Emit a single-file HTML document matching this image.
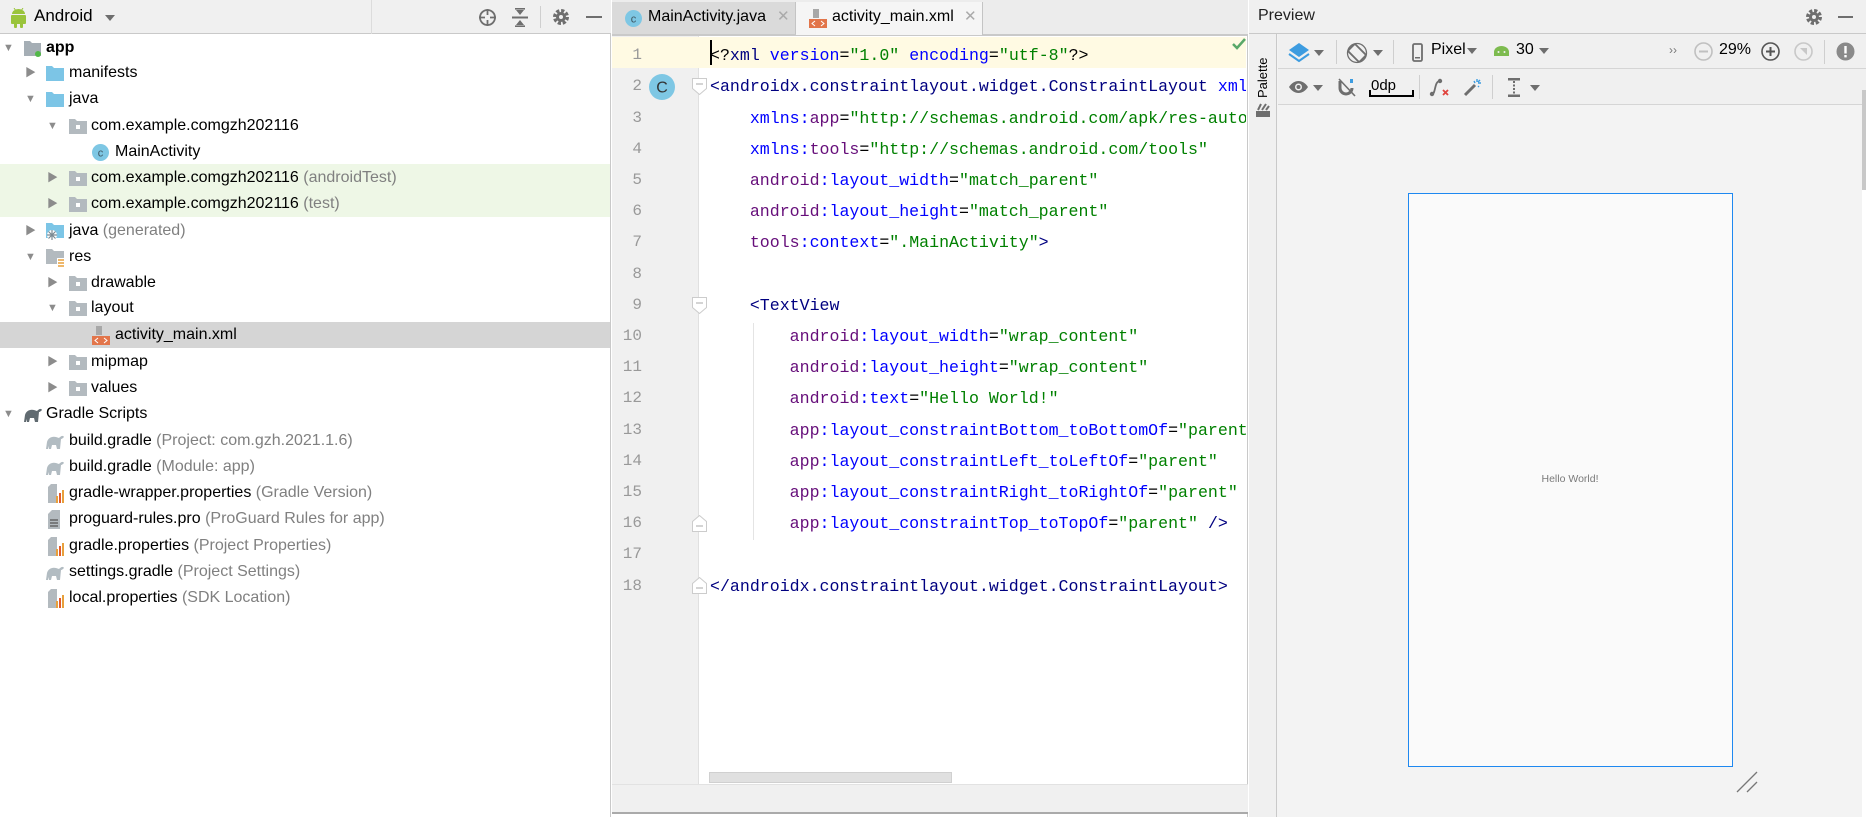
<!DOCTYPE html>
<html><head><meta charset="utf-8"><style>
*{margin:0;padding:0;box-sizing:border-box}
body{width:1866px;height:817px;overflow:hidden;background:#fff;font-family:"Liberation Sans","Noto Sans CJK SC",sans-serif;position:relative}
.abs{position:absolute}
#left{left:0;top:0;width:611px;height:817px;background:#fff;border-right:1px solid #c9c9c9}
.hdr{background:#f0f0f0;border-bottom:1px solid #c9c9c9;height:34px}
.row{position:absolute;left:0;width:610px;height:26px;font-size:16px;line-height:26px;color:#000;white-space:nowrap}
.row .t{position:absolute;top:0}
.g{color:#808080}
.arr{position:absolute;top:0;font-size:11px;color:#8c8c8c}
.ico{position:absolute}
.code{position:absolute;left:0;font-family:"Liberation Mono",monospace;font-size:16.6px;white-space:pre;height:31px;line-height:31px}
.ln{position:absolute;left:0;width:30px;text-align:right;font-family:"Liberation Mono",monospace;font-size:16px;color:#999;height:31px;line-height:31px}
.tg{color:#000080}.at{color:#0000ff}.ns{color:#660e7a}.v{color:#008000}.p{color:#000}
.sep{position:absolute;width:1px;background:#cfcfcf}
.dd{position:absolute;width:0;height:0;border-left:5px solid transparent;border-right:5px solid transparent;border-top:6px solid #6e6e6e}
</style></head><body>

<!-- LEFT PROJECT PANEL -->
<div id="left" class="abs">
 <div class="hdr abs" style="left:0;top:0;width:611px"></div>
 <div class="abs" style="left:371px;top:0;width:1px;height:34px;background:#dcdcdc"></div>
 <svg class="abs" style="left:10px;top:8px" width="17" height="20" viewBox="0 0 17 20"><rect x="1" y="7" width="15" height="9" rx="1" fill="#9ac43c"/><path d="M2 6a6.5 5 0 0 1 13 0z" fill="#9ac43c"/><rect x="4" y="15" width="3" height="5" rx="1" fill="#9ac43c"/><rect x="10" y="15" width="3" height="5" rx="1" fill="#9ac43c"/><line x1="4" y1="0" x2="6" y2="3" stroke="#9ac43c"/><line x1="13" y1="0" x2="11" y2="3" stroke="#9ac43c"/></svg>
 <div class="abs" style="left:34px;top:6px;font-size:17px;color:#000">Android</div>
 <div class="dd" style="left:105px;top:15px"></div>
 <svg class="abs" style="left:478px;top:8px" width="19" height="19" viewBox="0 0 19 19" fill="none" stroke="#6e6e6e" stroke-width="1.8"><circle cx="9.5" cy="9.5" r="7.5"/><path d="M9.5 1v6M9.5 12v6M1 9.5h6M12 9.5h6"/></svg>
 <svg class="abs" style="left:512px;top:8px" width="16" height="19" viewBox="0 0 16 19" fill="#6e6e6e"><rect x="0" y="8.5" width="16" height="2"/><path d="M8 7L4 2h8zM8 12l-4 5h8z"/><rect x="3" y="0" width="10" height="1.6"/><rect x="3" y="17.4" width="10" height="1.6"/></svg>
 <div class="sep" style="left:540px;top:6px;height:22px"></div>
 <svg class="abs" style="left:552px;top:8px" width="18" height="18" viewBox="0 0 18 18"><circle cx="9" cy="9" r="6" fill="none" stroke="#6e6e6e" stroke-width="4" stroke-dasharray="3 1.7"/><circle cx="9" cy="9" r="5" fill="#6e6e6e"/><circle cx="9" cy="9" r="2" fill="#f0f0f0"/></svg>
 <div class="abs" style="left:586px;top:16px;width:16px;height:2px;background:#6e6e6e"></div>

 <div class="abs" style="left:0;top:164px;width:610px;height:53px;background:#eef7e6"></div>
 <div class="abs" style="left:0;top:322px;width:610px;height:26px;background:#d5d5d5"></div>

 <div class="row" style="top:35px"><span class="arr" style="left:3px">▼</span>
  <svg class="ico" style="left:24px;top:5px" width="18" height="17"><path d="M0 1h6l2 2h9v13H0z" fill="#a5aeb5"/><circle cx="14" cy="14" r="3" fill="#52b848"/></svg>
  <span class="t" style="left:46px;font-weight:bold">app</span></div>
 <div class="row" style="top:60px"><span class="arr" style="left:25px">▶</span>
  <svg class="ico" style="left:46px;top:6px" width="18" height="15"><path d="M0 0h6l2 2h10v13H0z" fill="#7cc5e6"/></svg>
  <span class="t" style="left:69px">manifests</span></div>
 <div class="row" style="top:86px"><span class="arr" style="left:25px">▼</span>
  <svg class="ico" style="left:46px;top:6px" width="18" height="15"><path d="M0 0h6l2 2h10v13H0z" fill="#7cc5e6"/></svg>
  <span class="t" style="left:69px">java</span></div>
 <div class="row" style="top:113px"><span class="arr" style="left:47px">▼</span>
  <svg class="ico" style="left:69px;top:6px" width="18" height="15"><path d="M0 0h6l2 2h10v13H0z" fill="#b3babf"/><rect x="7" y="6" width="4" height="4" fill="#fff"/></svg>
  <span class="t" style="left:91px">com.example.comgzh202116</span></div>
 <div class="row" style="top:139px">
  <svg class="ico" style="left:92px;top:5px" width="17" height="17"><circle cx="8.5" cy="8.5" r="8.5" fill="#7ec7e4"/><text x="8.5" y="12.5" font-size="11" text-anchor="middle" fill="#3d5560" font-family="Liberation Sans">c</text></svg>
  <span class="t" style="left:115px">MainActivity</span></div>
 <div class="row" style="top:165px"><span class="arr" style="left:47px">▶</span>
  <svg class="ico" style="left:69px;top:6px" width="18" height="15"><path d="M0 0h6l2 2h10v13H0z" fill="#b3babf"/><rect x="7" y="6" width="4" height="4" fill="#fff"/></svg>
  <span class="t" style="left:91px">com.example.comgzh202116 <span class="g">(androidTest)</span></span></div>
 <div class="row" style="top:191px"><span class="arr" style="left:47px">▶</span>
  <svg class="ico" style="left:69px;top:6px" width="18" height="15"><path d="M0 0h6l2 2h10v13H0z" fill="#b3babf"/><rect x="7" y="6" width="4" height="4" fill="#fff"/></svg>
  <span class="t" style="left:91px">com.example.comgzh202116 <span class="g">(test)</span></span></div>
 <div class="row" style="top:218px"><span class="arr" style="left:25px">▶</span>
  <svg class="ico" style="left:46px;top:5px" width="19" height="18"><path d="M0 0h6l2 2h10v13H0z" fill="#7cc5e6"/><circle cx="6" cy="12" r="5" fill="#fff"/><path d="M6 7v10M1 12h10M2.5 8.5l7 7M9.5 8.5l-7 7" stroke="#7b8a93" stroke-width="1.2"/></svg>
  <span class="t" style="left:69px">java <span class="g">(generated)</span></span></div>
 <div class="row" style="top:244px"><span class="arr" style="left:25px">▼</span>
  <svg class="ico" style="left:46px;top:5px" width="19" height="18"><path d="M0 0h6l2 2h10v13H0z" fill="#b3babf"/><rect x="11" y="9" width="8" height="9" fill="#fff"/><path d="M12 11h6M12 14h6M12 17h6" stroke="#e8a03c" stroke-width="1.6"/></svg>
  <span class="t" style="left:69px">res</span></div>
 <div class="row" style="top:270px"><span class="arr" style="left:47px">▶</span>
  <svg class="ico" style="left:69px;top:6px" width="18" height="15"><path d="M0 0h6l2 2h10v13H0z" fill="#b3babf"/><rect x="7" y="6" width="4" height="4" fill="#fff"/></svg>
  <span class="t" style="left:91px">drawable</span></div>
 <div class="row" style="top:295px"><span class="arr" style="left:47px">▼</span>
  <svg class="ico" style="left:69px;top:6px" width="18" height="15"><path d="M0 0h6l2 2h10v13H0z" fill="#b3babf"/><rect x="7" y="6" width="4" height="4" fill="#fff"/></svg>
  <span class="t" style="left:91px">layout</span></div>
 <div class="row" style="top:322px">
  <svg class="ico" style="left:92px;top:4px" width="18" height="19"><path d="M4 0h6v9H4z" fill="#a8a8a8"/><rect x="0" y="10" width="18" height="9" fill="#e2754a"/><path d="M6 12l-3 2.5 3 2.5M12 12l3 2.5-3 2.5" stroke="#fff" fill="none"/></svg>
  <span class="t" style="left:115px">activity_main.xml</span></div>
 <div class="row" style="top:349px"><span class="arr" style="left:47px">▶</span>
  <svg class="ico" style="left:69px;top:6px" width="18" height="15"><path d="M0 0h6l2 2h10v13H0z" fill="#b3babf"/><rect x="7" y="6" width="4" height="4" fill="#fff"/></svg>
  <span class="t" style="left:91px">mipmap</span></div>
 <div class="row" style="top:375px"><span class="arr" style="left:47px">▶</span>
  <svg class="ico" style="left:69px;top:6px" width="18" height="15"><path d="M0 0h6l2 2h10v13H0z" fill="#b3babf"/><rect x="7" y="6" width="4" height="4" fill="#fff"/></svg>
  <span class="t" style="left:91px">values</span></div>
 <div class="row" style="top:401px"><span class="arr" style="left:3px">▼</span>
  <svg class="ico" style="left:23px;top:6px" width="19" height="15"><path d="M1 15l1-7c1-4 5-6 9-5l3 1c2-2 4-3 5-1-1 1-2 2-3 2l-1 10h-3l-1-4h-4l-1 4h-2l0-3-1 3z" fill="#606a70"/></svg>
  <span class="t" style="left:46px">Gradle Scripts</span></div>
 <div class="row" style="top:428px">
  <svg class="ico" style="left:45px;top:6px" width="19" height="15"><path d="M1 15l1-7c1-4 5-6 9-5l3 1c2-2 4-3 5-1-1 1-2 2-3 2l-1 10h-3l-1-4h-4l-1 4h-2l0-3-1 3z" fill="#b2bcc2"/></svg>
  <span class="t" style="left:69px">build.gradle <span class="g">(Project: com.gzh.2021.1.6)</span></span></div>
 <div class="row" style="top:454px">
  <svg class="ico" style="left:45px;top:6px" width="19" height="15"><path d="M1 15l1-7c1-4 5-6 9-5l3 1c2-2 4-3 5-1-1 1-2 2-3 2l-1 10h-3l-1-4h-4l-1 4h-2l0-3-1 3z" fill="#b2bcc2"/></svg>
  <span class="t" style="left:69px">build.gradle <span class="g">(Module: app)</span></span></div>
 <div class="row" style="top:480px">
  <svg class="ico" style="left:48px;top:4px" width="17" height="19"><path d="M0 3l3-3h6v19H0z" fill="#b3babf"/><rect x="8" y="12" width="2" height="7" fill="#e8a03c"/><rect x="11" y="9" width="2" height="10" fill="#e25a2c"/><rect x="14" y="6" width="2" height="13" fill="#e8a03c"/></svg>
  <span class="t" style="left:69px">gradle-wrapper.properties <span class="g">(Gradle Version)</span></span></div>
 <div class="row" style="top:506px">
  <svg class="ico" style="left:48px;top:4px" width="14" height="19"><path d="M0 4l4-4h8v19H0z" fill="#b3babf"/><path d="M2 10h8M2 13h8M2 16h8" stroke="#555" stroke-width="1.2"/></svg>
  <span class="t" style="left:69px">proguard-rules.pro <span class="g">(ProGuard Rules for app)</span></span></div>
 <div class="row" style="top:533px">
  <svg class="ico" style="left:48px;top:4px" width="17" height="19"><path d="M0 3l3-3h6v19H0z" fill="#b3babf"/><rect x="8" y="12" width="2" height="7" fill="#e8a03c"/><rect x="11" y="9" width="2" height="10" fill="#e25a2c"/><rect x="14" y="6" width="2" height="13" fill="#e8a03c"/></svg>
  <span class="t" style="left:69px">gradle.properties <span class="g">(Project Properties)</span></span></div>
 <div class="row" style="top:559px">
  <svg class="ico" style="left:45px;top:6px" width="19" height="15"><path d="M1 15l1-7c1-4 5-6 9-5l3 1c2-2 4-3 5-1-1 1-2 2-3 2l-1 10h-3l-1-4h-4l-1 4h-2l0-3-1 3z" fill="#b2bcc2"/></svg>
  <span class="t" style="left:69px">settings.gradle <span class="g">(Project Settings)</span></span></div>
 <div class="row" style="top:585px">
  <svg class="ico" style="left:48px;top:4px" width="17" height="19"><path d="M0 3l3-3h6v19H0z" fill="#b3babf"/><rect x="8" y="12" width="2" height="7" fill="#e8a03c"/><rect x="11" y="9" width="2" height="10" fill="#e25a2c"/><rect x="14" y="6" width="2" height="13" fill="#e8a03c"/></svg>
  <span class="t" style="left:69px">local.properties <span class="g">(SDK Location)</span></span></div>
</div>

<!-- EDITOR -->
<div class="abs" style="left:612px;top:0;width:636px;height:817px;background:#fff;border-right:1px solid #c9c9c9">
 <div class="abs" style="left:0;top:0;width:636px;height:36px;background:#ececec;border-bottom:2px solid #c9c9c9"></div>
 <div class="abs" style="left:0;top:2px;width:184px;height:32px;background:#dadada;border-right:1px solid #c4c4c4"></div>
 <svg class="abs" style="left:13px;top:10px" width="17" height="17"><circle cx="8.5" cy="8.5" r="8.5" fill="#7ec7e4"/><text x="8.5" y="12.5" font-size="11" text-anchor="middle" fill="#3d5560" font-family="Liberation Sans">c</text></svg>
 <div class="abs" style="left:36px;top:8px;font-size:16px;color:#000">MainActivity.java</div>
 <div class="abs" style="left:165px;top:7px;font-size:15px;color:#aaa">✕</div>
 <div class="abs" style="left:184px;top:2px;width:187px;height:33px;background:#f5f5f5;border-right:1px solid #c4c4c4"></div>
 <svg class="abs" style="left:197px;top:9px" width="18" height="19"><path d="M4 0h6v9H4z" fill="#a8a8a8"/><rect x="0" y="10" width="18" height="9" fill="#e2754a"/><path d="M6 12l-3 2.5 3 2.5M12 12l3 2.5-3 2.5" stroke="#fff" fill="none"/></svg>
 <div class="abs" style="left:220px;top:8px;font-size:16px;color:#000">activity_main.xml</div>
 <div class="abs" style="left:352px;top:7px;font-size:15px;color:#aaa">✕</div>

 <div class="abs" style="left:0;top:36px;width:87px;height:748px;background:#f0f0f0;border-right:1px solid #e0e0e0"></div>
 <div class="abs" style="left:0;top:37px;width:634px;height:31px;background:#fffae3"></div>
 <div class="abs" style="left:98px;top:40px;width:2px;height:25px;background:#000"></div>
 <svg class="abs" style="left:620px;top:38px" width="14" height="12"><path d="M1 6l4 4 8-9" stroke="#59a869" stroke-width="2.5" fill="none"/></svg>
 <svg class="abs" style="left:37px;top:74px" width="26" height="26"><circle cx="13" cy="13" r="13" fill="#7ec7e4"/><text x="13" y="18.5" font-size="16" text-anchor="middle" fill="#333" font-family="Liberation Sans">C</text></svg>
 <svg class="abs" style="left:80px;top:78px" width="15" height="17"><path d="M0.5 0.5h14v10l-7 6-7-6z" fill="#fff" stroke="#ccc"/><path d="M4 6h7" stroke="#aaa"/></svg>
 <svg class="abs" style="left:80px;top:297px" width="15" height="17"><path d="M0.5 0.5h14v10l-7 6-7-6z" fill="#fff" stroke="#ccc"/><path d="M4 6h7" stroke="#aaa"/></svg>
 <svg class="abs" style="left:80px;top:515px" width="15" height="17"><path d="M0.5 16.5h14v-10l-7-6-7 6z" fill="#fff" stroke="#ccc"/><path d="M4 11h7" stroke="#aaa"/></svg>
 <svg class="abs" style="left:80px;top:577px" width="15" height="17"><path d="M0.5 16.5h14v-10l-7-6-7 6z" fill="#fff" stroke="#ccc"/><path d="M4 11h7" stroke="#aaa"/></svg>
 <div class="abs" style="left:141px;top:323px;width:1px;height:217px;background:#e4e4e4"></div>

 <div class="ln" style="top:40px">1</div>
 <div class="ln" style="top:71px">2</div>
 <div class="ln" style="top:103px">3</div>
 <div class="ln" style="top:134px">4</div>
 <div class="ln" style="top:165px">5</div>
 <div class="ln" style="top:196px">6</div>
 <div class="ln" style="top:227px">7</div>
 <div class="ln" style="top:259px">8</div>
 <div class="ln" style="top:290px">9</div>
 <div class="ln" style="top:321px">10</div>
 <div class="ln" style="top:352px">11</div>
 <div class="ln" style="top:383px">12</div>
 <div class="ln" style="top:415px">13</div>
 <div class="ln" style="top:446px">14</div>
 <div class="ln" style="top:477px">15</div>
 <div class="ln" style="top:508px">16</div>
 <div class="ln" style="top:539px">17</div>
 <div class="ln" style="top:571px">18</div>

 <div class="abs" style="left:98px;top:36px;width:536px;height:748px;overflow:hidden">
 <div class="code" style="top:4px"><span class="p">&lt;?</span><span class="tg">xml </span><span class="at">version</span>=<span class="v">"1.0"</span> <span class="at">encoding</span>=<span class="v">"utf-8"</span><span class="p">?&gt;</span></div>
 <div class="code" style="top:35px"><span class="tg">&lt;androidx.constraintlayout.widget.ConstraintLayout </span><span class="at">xmlns:android</span></div>
 <div class="code" style="top:67px">    <span class="at">xmlns:</span><span class="ns">app</span>=<span class="v">"http://schemas.android.com/apk/res-auto"</span></div>
 <div class="code" style="top:98px">    <span class="at">xmlns:</span><span class="ns">tools</span>=<span class="v">"http://schemas.android.com/tools"</span></div>
 <div class="code" style="top:129px">    <span class="ns">android</span><span class="at">:layout_width</span>=<span class="v">"match_parent"</span></div>
 <div class="code" style="top:160px">    <span class="ns">android</span><span class="at">:layout_height</span>=<span class="v">"match_parent"</span></div>
 <div class="code" style="top:191px">    <span class="ns">tools</span><span class="at">:context</span>=<span class="v">".MainActivity"</span><span class="tg">&gt;</span></div>
 <div class="code" style="top:254px">    <span class="tg">&lt;TextView</span></div>
 <div class="code" style="top:285px">        <span class="ns">android</span><span class="at">:layout_width</span>=<span class="v">"wrap_content"</span></div>
 <div class="code" style="top:316px">        <span class="ns">android</span><span class="at">:layout_height</span>=<span class="v">"wrap_content"</span></div>
 <div class="code" style="top:347px">        <span class="ns">android</span><span class="at">:text</span>=<span class="v">"Hello World!"</span></div>
 <div class="code" style="top:379px">        <span class="ns">app</span><span class="at">:layout_constraintBottom_toBottomOf</span>=<span class="v">"parent"</span></div>
 <div class="code" style="top:410px">        <span class="ns">app</span><span class="at">:layout_constraintLeft_toLeftOf</span>=<span class="v">"parent"</span></div>
 <div class="code" style="top:441px">        <span class="ns">app</span><span class="at">:layout_constraintRight_toRightOf</span>=<span class="v">"parent"</span></div>
 <div class="code" style="top:472px">        <span class="ns">app</span><span class="at">:layout_constraintTop_toTopOf</span>=<span class="v">"parent"</span> <span class="tg">/&gt;</span></div>
 <div class="code" style="top:535px"><span class="tg">&lt;/androidx.constraintlayout.widget.ConstraintLayout&gt;</span></div>
 </div>
 <div class="abs" style="left:97px;top:772px;width:243px;height:11px;background:#e0e0e0;border:1px solid #d0d0d0"></div>
 <div class="abs" style="left:0;top:784px;width:636px;height:30px;background:#f0f0f0;border-top:1px solid #e2e2e2;border-bottom:2px solid #aaa"></div>
</div>

<!-- PREVIEW -->
<div class="abs" style="left:1249px;top:0;width:617px;height:817px;background:#f3f3f3">
 <div class="abs" style="left:0;top:0;width:617px;height:34px;background:#f0f0f0;border-bottom:1px solid #c9c9c9"></div>
 <div class="abs" style="left:9px;top:7px;font-size:16px;color:#222">Preview</div>
 <svg class="abs" style="left:556px;top:8px" width="18" height="18" viewBox="0 0 18 18"><circle cx="9" cy="9" r="6" fill="none" stroke="#6e6e6e" stroke-width="4" stroke-dasharray="3 1.7"/><circle cx="9" cy="9" r="5" fill="#6e6e6e"/><circle cx="9" cy="9" r="2" fill="#f0f0f0"/></svg>
 <div class="abs" style="left:589px;top:16px;width:15px;height:2px;background:#6e6e6e"></div>
 <div class="abs" style="left:0;top:34px;width:28px;height:783px;background:#f0f0f0;border-right:1px solid #c9c9c9"></div>
 <div class="abs" style="left:6px;top:98px;transform:rotate(-90deg);transform-origin:0 0;font-size:13px;color:#000;white-space:nowrap">Palette</div>
 <svg class="abs" style="left:7px;top:103px" width="14" height="14"><rect x="0" y="8" width="14" height="6" fill="#6e6e6e"/><path d="M2 7l3-6M6 7l4-6M10 7l3-4" stroke="#6e6e6e" stroke-width="2"/></svg>
 <div class="abs" style="left:29px;top:34px;width:588px;height:35px;background:#f0f0f0;border-bottom:1px solid #d5d5d5"></div>
 <div class="abs" style="left:29px;top:69px;width:588px;height:36px;background:#f0f0f0;border-bottom:1px solid #d5d5d5"></div>
 <svg class="abs" style="left:39px;top:42px" width="22" height="21"><path d="M11 1l10 7-10 7-10-7z" fill="#3d9ce0"/><path d="M1 12l10 7 10-7" fill="none" stroke="#3d9ce0" stroke-width="2"/></svg>
 <div class="dd" style="left:65px;top:50px"></div>
 <div class="sep" style="left:87px;top:40px;height:24px"></div>
 <svg class="abs" style="left:97px;top:42px" width="22" height="22"><circle cx="11" cy="11" r="9.5" fill="none" stroke="#6e6e6e" stroke-width="1.3"/><rect x="6" y="3" width="10" height="16" rx="1.5" transform="rotate(-45 11 11)" fill="none" stroke="#6e6e6e" stroke-width="1.8"/></svg>
 <div class="dd" style="left:124px;top:50px"></div>
 <div class="sep" style="left:144px;top:40px;height:24px"></div>
 <svg class="abs" style="left:163px;top:43px" width="11" height="19"><rect x="1" y="1" width="9" height="17" rx="1.5" fill="none" stroke="#6e6e6e" stroke-width="1.8"/><rect x="3" y="14" width="5" height="1.5" fill="#6e6e6e"/></svg>
 <div class="abs" style="left:182px;top:41px;font-size:16px;color:#000">Pixel</div>
 <div class="dd" style="left:218px;top:48px"></div>
 <svg class="abs" style="left:244px;top:45px" width="17" height="12"><path d="M1 11V7a7.5 6 0 0 1 15 0v4z" fill="#7dbb4f"/><circle cx="5.5" cy="7" r="1" fill="#f0f0f0"/><circle cx="11.5" cy="7" r="1" fill="#f0f0f0"/></svg>
 <div class="abs" style="left:267px;top:41px;font-size:16px;color:#000">30</div>
 <div class="dd" style="left:290px;top:48px"></div>
 <div class="abs" style="left:420px;top:43px;font-size:12px;color:#777">››</div>
 <svg class="abs" style="left:445px;top:42px" width="19" height="19"><circle cx="9.5" cy="9.5" r="8.5" fill="none" stroke="#c0c0c0" stroke-width="1.6"/><path d="M5 9.5h9" stroke="#c0c0c0" stroke-width="2"/></svg>
 <div class="abs" style="left:470px;top:41px;font-size:16px;color:#000">29%</div>
 <svg class="abs" style="left:512px;top:42px" width="19" height="19"><circle cx="9.5" cy="9.5" r="8.5" fill="none" stroke="#555" stroke-width="1.6"/><path d="M5 9.5h9M9.5 5v9" stroke="#555" stroke-width="2"/></svg>
 <svg class="abs" style="left:545px;top:42px" width="19" height="19"><circle cx="9.5" cy="9.5" r="8.5" fill="none" stroke="#c8c8c8" stroke-width="1.6"/><path d="M6 6h7v7z" fill="#c8c8c8"/></svg>
 <div class="sep" style="left:575px;top:40px;height:24px"></div>
 <svg class="abs" style="left:587px;top:42px" width="19" height="19"><circle cx="9.5" cy="9.5" r="9" fill="#8a8a8a"/><rect x="8.3" y="4" width="2.4" height="7.5" fill="#fff"/><rect x="8.3" y="13" width="2.4" height="2.4" fill="#fff"/></svg>
 <svg class="abs" style="left:39px;top:80px" width="21" height="14"><path d="M1 7c5-8 14-8 19 0-5 8-14 8-19 0z" fill="#6e6e6e"/><circle cx="10.5" cy="7" r="3.5" fill="#f0f0f0"/><circle cx="10.5" cy="7" r="2" fill="#6e6e6e"/></svg>
 <div class="dd" style="left:64px;top:85px"></div>
 <svg class="abs" style="left:89px;top:78px" width="18" height="19"><path d="M2 3v7a6 6 0 0 0 12 0" fill="none" stroke="#6e6e6e" stroke-width="3"/><rect x="12" y="1" width="3" height="4" fill="#3d9ce0"/><path d="M1 1l16 17" stroke="#6e6e6e" stroke-width="1.6"/></svg>
 <div class="abs" style="left:122px;top:77px;font-size:15px;color:#000">0dp</div>
 <div class="abs" style="left:120px;top:95px;width:44px;height:1.5px;background:#000"></div>
 <div class="abs" style="left:120px;top:90px;width:1.5px;height:7px;background:#000"></div>
 <div class="abs" style="left:163px;top:90px;width:1.5px;height:7px;background:#000"></div>
 <div class="sep" style="left:170px;top:75px;height:24px"></div>
 <svg class="abs" style="left:180px;top:78px" width="21" height="19"><path d="M3 16c4 0 2-13 8-13" fill="none" stroke="#6e6e6e" stroke-width="1.8"/><circle cx="3" cy="16" r="2.2" fill="#6e6e6e"/><circle cx="11" cy="3" r="2.2" fill="#6e6e6e"/><path d="M14 12l5 5M19 12l-5 5" stroke="#e0443e" stroke-width="1.8"/></svg>
 <svg class="abs" style="left:214px;top:78px" width="19" height="19"><path d="M2 17l10-10" stroke="#6e6e6e" stroke-width="3"/><path d="M14 1v3M18 5h-3M17 2l-2 2M11 3l1 2M16 9l-1-1" stroke="#3d9ce0" stroke-width="1.4"/></svg>
 <div class="sep" style="left:243px;top:75px;height:24px"></div>
 <svg class="abs" style="left:259px;top:78px" width="12" height="19"><rect x="0" y="0" width="12" height="2.5" fill="#6e6e6e"/><rect x="0" y="16.5" width="12" height="2.5" fill="#6e6e6e"/><path d="M6 3v13" stroke="#6e6e6e" stroke-width="2" stroke-dasharray="2 1.5"/></svg>
 <div class="dd" style="left:281px;top:85px"></div>
 <div class="abs" style="left:159px;top:193px;width:325px;height:574px;background:#fafafa;border:1.5px solid #1e88f0"></div>
 <div class="abs" style="left:271px;top:473px;width:100px;text-align:center;font-size:10.5px;color:#7a7a7a">Hello World!</div>
 <svg class="abs" style="left:487px;top:771px" width="22" height="22"><path d="M1 21L21 1M11 21l10-10" stroke="#777" stroke-width="1.3"/></svg>
 <div class="abs" style="left:613px;top:104px;width:4px;height:713px;background:#fff"></div>
 <div class="abs" style="left:613px;top:90px;width:4px;height:100px;background:#c8c8c8"></div>
</div>
</body></html>
